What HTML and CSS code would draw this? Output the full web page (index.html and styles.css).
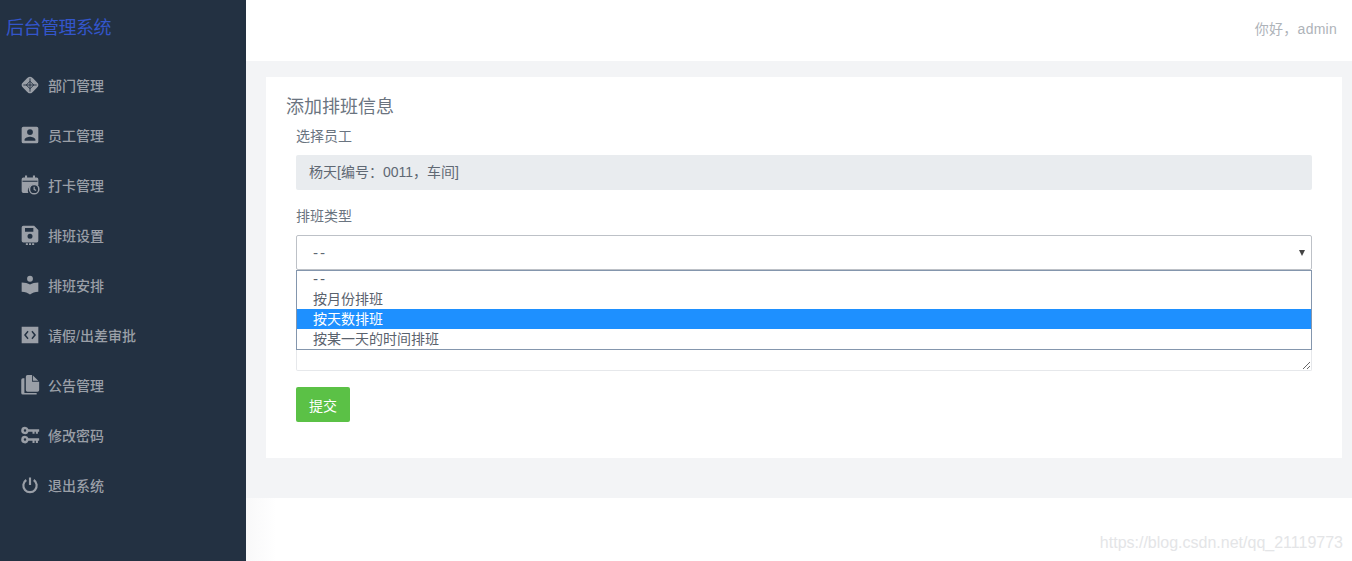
FILE: index.html
```html
<!DOCTYPE html>
<html lang="en">
<head>
  <meta charset="UTF-8">
  <meta name="viewport" content="width=device-width, initial-scale=1.0">
  <title>后台管理系统</title>

  <link rel="stylesheet" href="styles.css">
</head>

<body>

  <!-- Sidebar -->
  <aside class="sidebar">
    <div class="brand">后台管理系统</div>
    <ul class="menu">
      <li class="menu-item">
        <svg class="menu-icon" viewBox="0 0 24 24"><path d="M12 2c1.600 0 2.600 1 3.600 2l4.400 4.400c1 1 2 2 2 3.600s-1 2.600-2 3.600L15.600 20c-1 1-2 2-3.600 2s-2.600-1-3.600-2L4 15.600c-1-1-2-2-2-3.600s1-2.600 2-3.600L8.400 4c1-1 2-2 3.600-2z"/><path d="M12 7.500L7.500 12l4.500 4.500 4.500-4.500zM12 4v16M4 12h16" fill="none" stroke="#233142" stroke-width="1.100"/></svg>
        <span>部门管理</span>
      </li>
      <li class="menu-item">
        <svg class="menu-icon" viewBox="0 0 24 24"><path d="M2 4v16a2 2 0 0 0 2 2h16a2 2 0 0 0 2-2V4a2 2 0 0 0-2-2H4a2 2 0 0 0-2 2zm13.500 4.500a3.500 3.500 0 0 1-7 0 3.500 3.500 0 0 1 7 0zM5.500 17.500c0-2.200 4.300-3.500 6.500-3.500s6.500 1.300 6.500 3.500V19h-13z"/></svg>
        <span>员工管理</span>
      </li>
      <li class="menu-item">
        <svg class="menu-icon" viewBox="0 0 24 24"><path d="M4 3h2V0.500h2.500V3h7V0.500H18V3h2a2 2 0 0 1 2 2v7h-4a7 7 0 0 0-8 9.500H4a2 2 0 0 1-2-2V5a2 2 0 0 1 2-2z"/><path d="M3 7.500h18" stroke="#233142" stroke-width="1.300"/><circle cx="17" cy="17" r="5.600" fill="#233142" stroke="#9a9fa7" stroke-width="1.800"/><path d="M17 14v3.300l2.300 1.300" fill="none" stroke="#9a9fa7" stroke-width="1.500"/></svg>
        <span>打卡管理</span>
      </li>
      <li class="menu-item">
        <svg class="menu-icon" viewBox="0 0 24 24"><path fill-rule="evenodd" d="M4 1h13l5 5v13a2 2 0 0 1-2 2H4a2 2 0 0 1-2-2V3a2 2 0 0 1 2-2zM6 3.500V8h10V3.500zM12 10.500a3 3 0 1 0 0 6 3 3 0 0 0 0-6z"/><path d="M7 22h2.500v2H7zM10.800 22h2.500v2h-2.500zM14.500 22H17v2h-2.500z"/></svg>
        <span>排班设置</span>
      </li>
      <li class="menu-item">
        <svg class="menu-icon" viewBox="0 0 24 24"><circle cx="12" cy="4.500" r="3.500"/><path d="M2 9c4 0 7.500 1 10 2.500C14.500 10 18 9 22 9v11c-4 0-7.500 1.500-10 3.500C9.500 21.500 6 20 2 20z"/></svg>
        <span>排班安排</span>
      </li>
      <li class="menu-item">
        <svg class="menu-icon" viewBox="0 0 24 24"><path fill-rule="evenodd" d="M2 2h20v20H2zM10.300 8.200L9 7l-4.200 5L9 17l1.300-1.200L7.200 12zM13.700 8.200l3.100 3.800-3.100 3.800L15 17l4.200-5L15 7z"/></svg>
        <span>请假/出差审批</span>
      </li>
      <li class="menu-item">
        <svg class="menu-icon" viewBox="0 0 24 24"><path d="M15.500 7H22l-6.500-6.500zM9 0h5.500v8H23v10a2 2 0 0 1-2 2H9a2 2 0 0 1-2-2V2a2 2 0 0 1 2-2zM3.500 4H5.300v17.500H20v2H3.500a2 2 0 0 1-2-2V6a2 2 0 0 1 2-2z"/></svg>
        <span>公告管理</span>
      </li>
      <li class="menu-item">
        <svg class="menu-icon" viewBox="0 0 24 24"><path fill-rule="evenodd" d="M6 2a4.500 4.500 0 0 1 4.200 3H23v3h-1.500v2.500h-2.500V8h-1.500v2.500H15V8h-4.800A4.500 4.500 0 1 1 6 2zm0 3a1.500 1.500 0 1 0 0 3 1.500 1.500 0 0 0 0-3z"/><path fill-rule="evenodd" d="M6 13a4.500 4.500 0 0 1 4.200 3H23v3h-1.500v2.500h-2.500V19h-1.500v2.500H15V19h-4.800A4.500 4.500 0 1 1 6 13zm0 3a1.500 1.500 0 1 0 0 3 1.500 1.500 0 0 0 0-3z"/></svg>
        <span>修改密码</span>
      </li>
      <li class="menu-item">
        <svg class="menu-icon" viewBox="0 0 24 24"><path d="M12 3v9M7.500 6a8 8 0 1 0 9 0" fill="none" stroke="#9a9fa7" stroke-width="2.600"/></svg>
        <span>退出系统</span>
      </li>
    </ul>
  </aside>

  <div class="main">
    <!-- Top bar -->
    <header class="topbar">你好，admin</header>

    <div class="content">
      <div class="card">
        <h4 class="card-title">添加排班信息</h4>
        <form class="form">
          <div class="form-group">
            <label class="form-label">选择员工</label>
            <div class="form-control readonly">杨天[编号：0011，车间]</div>
          </div>
          <div class="form-group">
            <label class="form-label">排班类型</label>
            <div class="select-wrap">
              <div class="select-box">
                <span class="dash">--</span>
                <span class="select-arrow"></span>
              </div>
              <!-- Opened option list, lies over the textarea below -->
              <ul class="select-list">
                <li class="dash">--</li>
                <li>按月份排班</li>
                <li class="active">按天数排班</li>
                <li>按某一天的时间排班</li>
              </ul>
            </div>
          </div>
          <div class="note-box">
            <svg class="resize-grip" viewBox="0 0 10 10"><path d="M9 2L2 9M9 6L6 9" stroke="#666" stroke-width="1" fill="none"/></svg>
          </div>
          <button class="btn-submit" type="button">提交</button>
        </form>
      </div>
    </div>

    <div class="bottom"></div>
  </div>

  <div class="watermark">https://blog.csdn.net/qq_21119773</div>

</body>
</html>
```

FILE: styles.css
```css
* {
  box-sizing: border-box;
}

body {
  font-family: "Liberation Sans", "Noto Sans CJK SC", sans-serif;
  font-size: 14px;
  display: flex;
  height: 561px;
  margin: 0;
  background-color: #fff;
  color: #6a7480;
  overflow: hidden;
}

/* Sidebar */
.sidebar {
  width: 246px;
  flex-shrink: 0;
  background-color: #233142;
}

.brand {
  height: 60px;
  padding: 15px 0 0 6px;
  font-size: 18px;
  line-height: 26px;
  letter-spacing: -0.5px;
  color: #3356cc;
}

.menu {
  list-style: none;
  margin: 0;
  padding: 0;
}

.menu-item {
  display: flex;
  align-items: center;
  height: 50px;
  padding-left: 20px;
  color: #9a9fa7;
  font-weight: 500;
}

.menu-icon {
  width: 20px;
  height: 20px;
  margin-right: 8px;
  fill: #9a9fa7;
}

/* Main area */
.main {
  flex: 1;
  display: flex;
  flex-direction: column;
}

.topbar {
  height: 61px;
  padding-right: 15px;
  line-height: 58px;
  text-align: right;
  letter-spacing: 0.25px;
  color: #aeb3b9;
  background-color: #fff;
  box-shadow: 0 1px 4px rgba(0, 0, 0, 0.05);
}

.content {
  height: 437px;
  padding: 16px 10px 40px 20px;
  background-color: #f3f4f6;
}

.card {
  height: 381px;
  padding: 17px 30px 0 20px;
  background-color: #fff;
}

.card-title {
  margin: 0;
  font-size: 18px;
  font-weight: 400;
  line-height: 26px;
  color: #6a7480;
}

.form {
  padding: 6px 0 0 10px;
}

.form-group {
  margin-bottom: 16px;
}

.form-label {
  display: block;
  height: 29px;
  line-height: 20px;
}

.form-control {
  height: 35px;
  padding: 0 13px;
  line-height: 34px;
  border-radius: 2px;
}

.readonly {
  background-color: #e9ecef;
  color: #5f6873;
}

.select-wrap {
  position: relative;
}

.select-box {
  display: flex;
  justify-content: space-between;
  align-items: center;
  height: 35px;
  padding: 0 6px 0 16px;
  border: 1px solid #bdc1c7;
  border-radius: 2px;
  color: #5f6873;
}

.dash {
  font-family: "DejaVu Sans", sans-serif;
  letter-spacing: 2px;
}

.select-arrow {
  width: 0;
  height: 0;
  border-left: 3.5px solid transparent;
  border-right: 3.5px solid transparent;
  border-top: 6px solid #444;
}

.select-list {
  position: absolute;
  top: 35px;
  left: 0;
  right: 0;
  z-index: 2;
  list-style: none;
  margin: 0;
  padding: 0;
  height: 80px;
  background-color: #fff;
  border: 1px solid #8496ad;
  color: #5a626d;
}

.select-list li {
  height: 20px;
  padding-left: 16px;
  line-height: 20px;
}

.select-list li:first-child {
  height: 18px;
  line-height: 16px;
}

.select-list .active {
  background-color: #1e90ff;
  color: #fff;
}

.note-box {
  position: relative;
  height: 101px;
  margin-top: -16px;
  border: 1px solid #e6e8eb;
  border-top: none;
  border-radius: 0 0 2px 2px;
}

.resize-grip {
  position: absolute;
  right: 0;
  bottom: 0;
  width: 10px;
  height: 10px;
}

.btn-submit {
  display: block;
  width: 54px;
  height: 35px;
  margin-top: 16px;
  border: none;
  border-radius: 2px;
  background-color: #5bc146;
  color: #fff;
  font-family: inherit;
  font-size: 14px;
}

.bottom {
  flex: 1;
  background: linear-gradient(90deg, #f8f8f9, #fff 30px);
}

.watermark {
  position: absolute;
  right: 9px;
  top: 533px;
  font-size: 16px;
  line-height: 20px;
  color: #e4e5e7;
}
```
